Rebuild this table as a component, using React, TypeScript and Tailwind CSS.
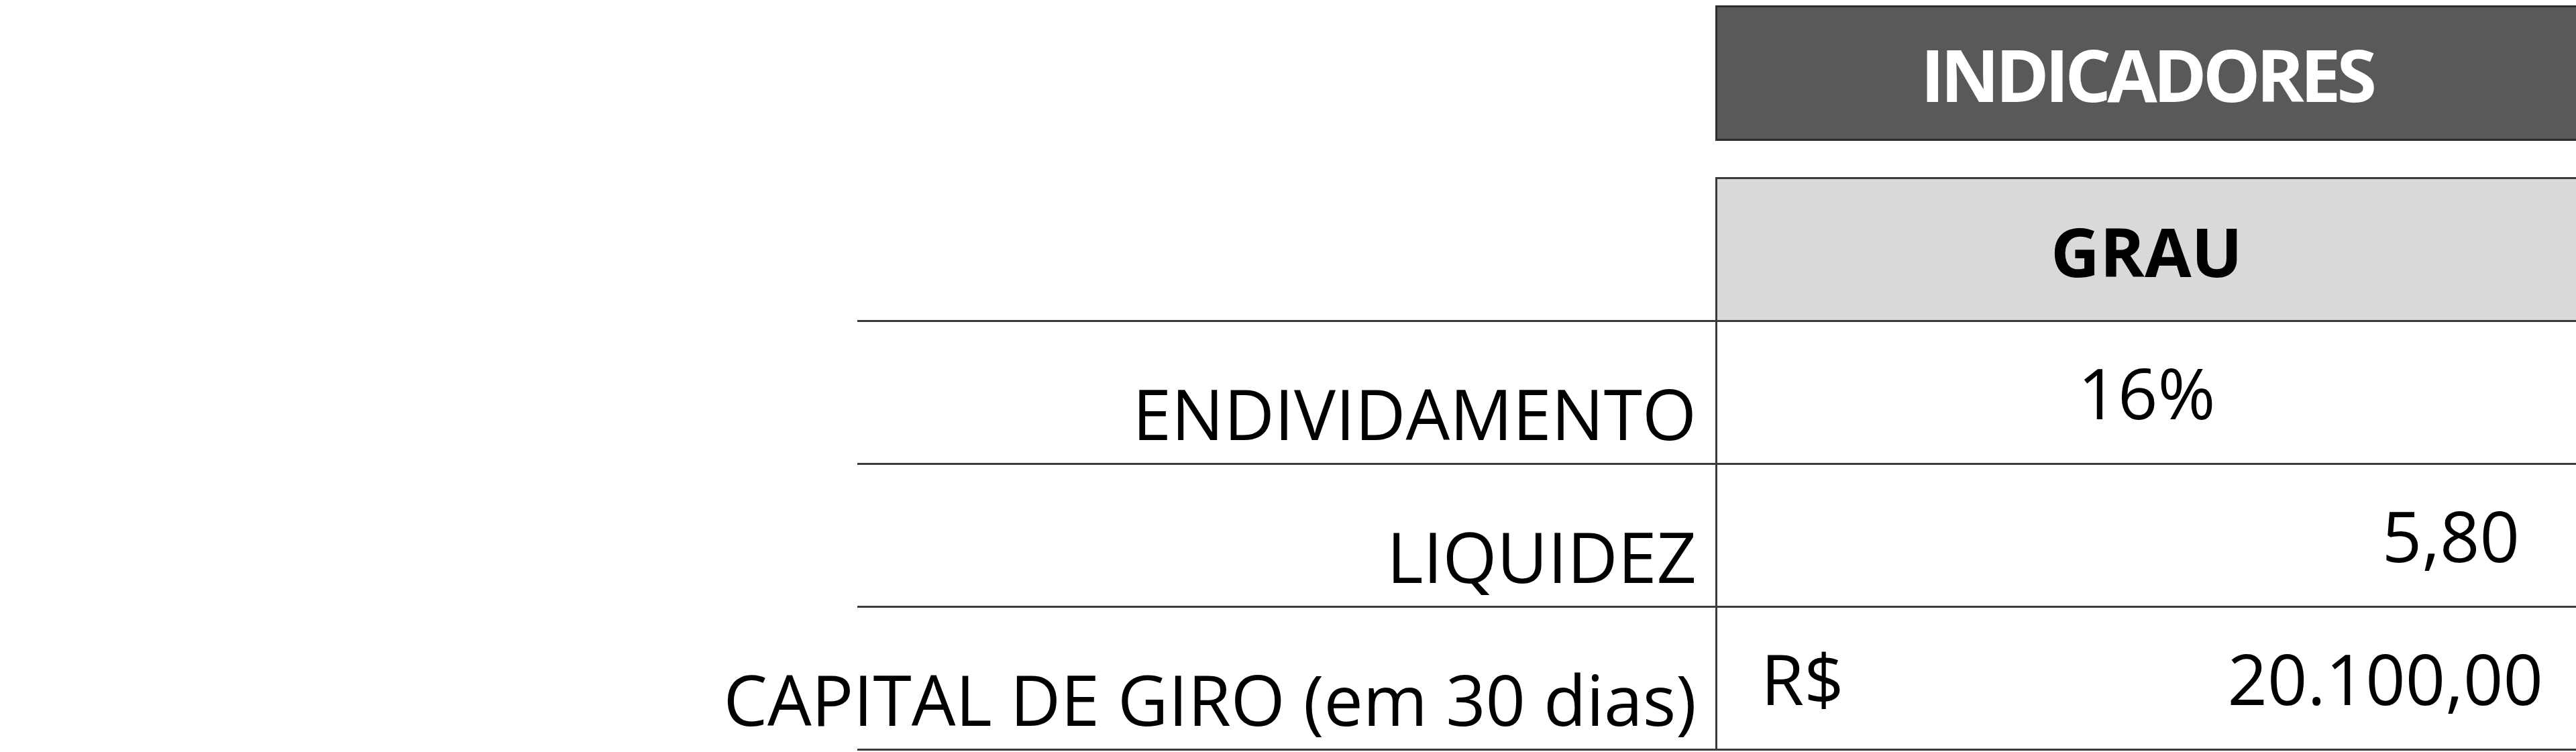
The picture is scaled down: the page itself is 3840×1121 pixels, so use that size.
import React from 'react';

type Row = {
  label: string;
  value: React.ReactNode;
};

const rows: Row[] = [
  {
    label: 'ENDIVIDAMENTO',
    value: <div className="flex h-full items-center justify-center">16%</div>,
  },
  {
    label: 'LIQUIDEZ',
    value: <div className="flex h-full items-center justify-end pr-[84px]">5,80</div>,
  },
  {
    label: 'CAPITAL DE GIRO (em 30 dias)',
    value: (
      <div className="flex h-full items-center justify-between pl-[65px] pr-[49px]">
        <span>R$</span>
        <span>20.100,00</span>
      </div>
    ),
  },
];

export default function App() {
  return (
    <div className="h-[1121px] w-[3840px] overflow-hidden bg-white font-['Open_Sans',sans-serif] text-black">
      {/* title bar */}
      <div className="grid grid-cols-[2557px_1fr] pt-[8px]">
        <div />
        <div className="flex h-[202px] items-center justify-center border-y-[3px] border-l-[3px] border-[#2e2e2e] bg-[#595959] pt-[4px] text-[108px] font-bold leading-none tracking-[-6px] text-white">
          INDICADORES
        </div>
      </div>

      {/* table */}
      <div className="mt-[54px] grid grid-cols-[1278px_1279px_1fr]">
        <div />
        <div className="border-b-[3px] border-[#3a3a3a]" />
        <div className="flex h-[216px] items-center justify-center border-y-[3px] border-l-[3px] border-[#3a3a3a] bg-[#d9d9d9] pt-[4px] text-[101px] font-bold leading-none">
          GRAU
        </div>

        {rows.map((row) => (
          <React.Fragment key={row.label}>
            <div />
            <div className="flex h-[213px] items-end justify-end whitespace-nowrap border-b-[3px] border-[#3a3a3a] pr-[28px] pb-[22px] text-[104px] leading-none">
              <span className="shrink-0">{row.label}</span>
            </div>
            <div className="h-[213px] border-b-[3px] border-l-[3px] border-[#3a3a3a] text-[104px] leading-none">
              {row.value}
            </div>
          </React.Fragment>
        ))}
      </div>
    </div>
  );
}
